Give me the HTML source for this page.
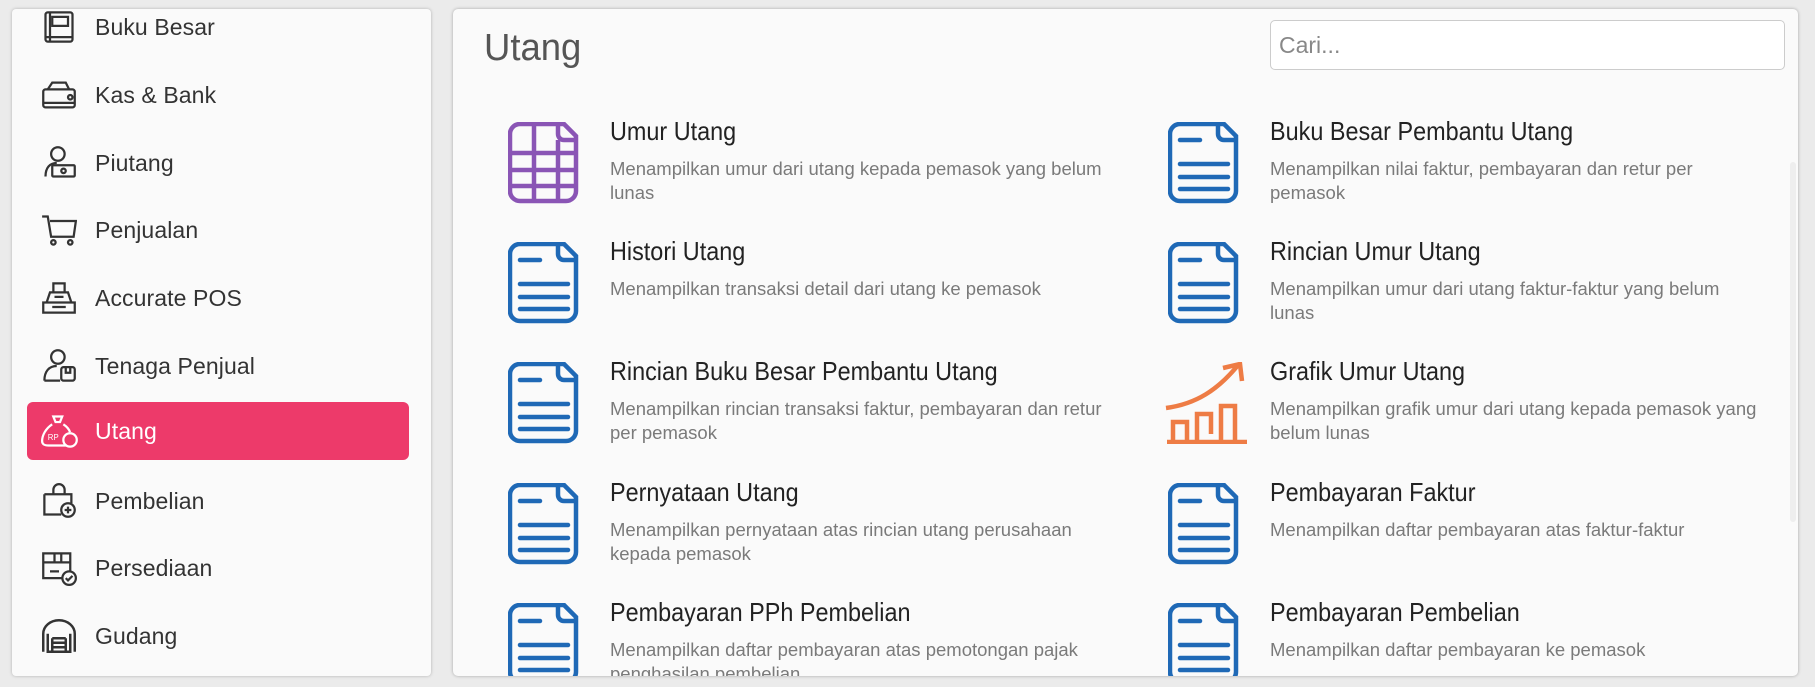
<!DOCTYPE html>
<html><head><meta charset="utf-8"><style>
*{box-sizing:border-box;margin:0;padding:0}
body{width:1815px;height:687px;background:#ebebeb;font-family:"Liberation Sans",sans-serif;position:relative;overflow:hidden}
.side{position:absolute;left:12px;top:9px;width:419px;height:667px;background:#fafafa;border-radius:4px;box-shadow:0 0 3px rgba(0,0,0,.25);overflow:hidden}
.sb{position:absolute;left:424px;top:131px;width:6px;height:332px;background:#eee;border-radius:3px}
.si{position:absolute;left:0;width:410px;height:58px;font-size:23px;color:#333;letter-spacing:.1px}
.si svg{position:absolute;left:29px;top:11px}
.si span{position:absolute;left:83px;top:50%;transform:translateY(-48%)}
.si.act{left:15px;width:382px;background:#ed3a6a;border-radius:6px;color:#fff}
.si.act svg{left:14px}.si.act span{left:68px}
.main{position:absolute;left:453px;top:9px;width:1345px;height:667px;background:#fafafa;border-radius:5px;box-shadow:0 0 3px rgba(0,0,0,.3);overflow:hidden}
h1{position:absolute;left:31px;top:18px;font-weight:normal;font-size:38px;color:#555;transform:scaleX(.96);transform-origin:left}
.search{position:absolute;left:817px;top:11px;width:515px;height:50px;border:1px solid #ccc;border-radius:5px;background:#fff;font-size:23px;color:#888;padding:11px 0 0 8px}
.msb{position:absolute;left:1337px;top:153px;width:6px;height:360px;background:#eee;border-radius:3px}
.it{position:absolute;width:560px}
.it svg{position:absolute;left:0;top:0}
.it b{position:absolute;left:102px;top:-6px;font-weight:normal;font-size:26px;color:#222;white-space:nowrap;transform:scaleX(.9);transform-origin:left}
.it p{position:absolute;left:102px;top:35px;width:495px;font-size:18.5px;line-height:24px;color:#7a7a7a}
</style></head><body>
<div class="side">
<div class="sb"></div>
<div class="si" style="top:-11px"><svg width="36" height="36" viewBox="0 0 32 32" fill="none" stroke="#333" stroke-width="2"><rect x="4" y="3" width="24" height="26" rx="2"/><rect x="10" y="7" width="14" height="8"/><path d="M8 3v26M4 25h24"/></svg><span>Buku Besar</span></div>
<div class="si" style="top:57px"><svg width="36" height="36" viewBox="0 0 32 32" fill="none" stroke="#333" stroke-width="2"><rect x="2" y="11" width="28" height="16" rx="2"/><path d="M6 11l4-6h12l3 6M2 23h28"/><circle cx="26" cy="18" r="2"/></svg><span>Kas &amp; Bank</span></div>
<div class="si" style="top:125px"><svg width="36" height="36" viewBox="0 0 32 32" fill="none" stroke="#333" stroke-width="2"><circle cx="15" cy="8" r="6"/><path d="M4 28c0-8 4-12 10-12"/><rect x="10" y="18" width="20" height="10" rx="1"/><circle cx="20" cy="23" r="2"/></svg><span>Piutang</span></div>
<div class="si" style="top:192px"><svg width="36" height="36" viewBox="0 0 32 32" fill="none" stroke="#333" stroke-width="2"><path d="M1 4h5l3 18h20l2-14H8"/><circle cx="11" cy="27" r="2"/><circle cx="26" cy="27" r="2"/></svg><span>Penjualan</span></div>
<div class="si" style="top:260px"><svg width="36" height="36" viewBox="0 0 32 32" fill="none" stroke="#333" stroke-width="2"><rect x="2" y="20" width="28" height="9"/><path d="M5 20l3-9h16l3 9M11 11V3h10v8M12 15h8M10 24h12"/></svg><span>Accurate POS</span></div>
<div class="si" style="top:328px"><svg width="36" height="36" viewBox="0 0 32 32" fill="none" stroke="#333" stroke-width="2"><circle cx="15" cy="8" r="6"/><path d="M3 29c0-8 4-13 11-13h0M3 29h14"/><rect x="18" y="17" width="12" height="12" rx="2"/><path d="M22 17v5h4v-5"/></svg><span>Tenaga Penjual</span></div>
<div class="si act" style="top:393px"><svg width="38" height="36" viewBox="0 0 34 32" fill="none" stroke="#fff" stroke-width="2"><path d="M11 3h8l-2 5h-4zM10 10c-6 4-9 10-9 15 0 3 2 4 6 4h16"/><path d="M20 10c3 2 5 4 6 7"/><circle cx="26" cy="24" r="6"/><text x="6" y="24" font-size="7" fill="#fff" stroke="none" font-family="Liberation Sans">RP</text></svg><span>Utang</span></div>
<div class="si" style="top:463px"><svg width="36" height="36" viewBox="0 0 32 32" fill="none" stroke="#333" stroke-width="2"><path d="M11 10V6a5 5 0 0110 0v4M3 10h24v8M3 10v18h15"/><circle cx="24" cy="24" r="6"/><path d="M24 21v6M21 24h6"/></svg><span>Pembelian</span></div>
<div class="si" style="top:530px"><svg width="36" height="36" viewBox="0 0 32 32" fill="none" stroke="#333" stroke-width="2"><rect x="2" y="3" width="24" height="22"/><path d="M2 11h24M12 3v8h6V3M8 19h8"/><circle cx="25" cy="25" r="6" fill="#fafafa"/><path d="M22 25l2 2 4-4"/></svg><span>Persediaan</span></div>
<div class="si" style="top:598px"><svg width="36" height="36" viewBox="0 0 32 32" fill="none" stroke="#333" stroke-width="2.2"><path d="M2 14a14 12 0 0128 0M6 14v16h20V14M2 14v16M30 14v16"/><path d="M10 18h12M10 22h12M10 26h12M10 18v12M22 18v12"/></svg><span>Gudang</span></div>
</div>
<div class="main">
<h1>Utang</h1>
<div class="search">Cari...</div>
<div class="msb"></div>
<svg width="0" height="0" style="position:absolute"><defs>
<g id="doc" fill="none" stroke="#1f69b6" stroke-width="4.5" stroke-linecap="round"><path d="M12 2h44l12 12v55a10 10 0 01-10 10H12A10 10 0 012 69V12A10 10 0 0112 2z"/><path d="M50 3v9a6 6 0 006 6h11"/><path d="M12 18h20M12 42h48M12 55h48M12 67h48"/></g>
</defs></svg>
<div class="it" style="left:55px;top:113px"><svg width="72" height="82" viewBox="0 0 72 82" fill="none" stroke="#8a55b5" stroke-width="4.5"><path d="M12 2h44l12 12v55a10 10 0 01-10 10H12A10 10 0 012 69V12A10 10 0 0112 2z"/><path d="M50 3v9a6 6 0 006 6h11M26 2v77M50 18v61M2 31h66M2 48h66M2 64h66"/></svg><b>Umur Utang</b><p>Menampilkan umur dari utang kepada pemasok yang belum lunas</p></div>
<div class="it" style="left:55px;top:233px"><svg width="72" height="82" viewBox="0 0 72 82"><use href="#doc"/></svg><b>Histori Utang</b><p>Menampilkan transaksi detail dari utang ke pemasok</p></div>
<div class="it" style="left:55px;top:353px"><svg width="72" height="82" viewBox="0 0 72 82"><use href="#doc"/></svg><b>Rincian Buku Besar Pembantu Utang</b><p>Menampilkan rincian transaksi faktur, pembayaran dan retur per pemasok</p></div>
<div class="it" style="left:55px;top:474px"><svg width="72" height="82" viewBox="0 0 72 82"><use href="#doc"/></svg><b>Pernyataan Utang</b><p>Menampilkan pernyataan atas rincian utang perusahaan kepada pemasok</p></div>
<div class="it" style="left:55px;top:594px"><svg width="72" height="82" viewBox="0 0 72 82"><use href="#doc"/></svg><b>Pembayaran PPh Pembelian</b><p>Menampilkan daftar pembayaran atas pemotongan pajak penghasilan pembelian</p></div>
<div class="it" style="left:715px;top:113px"><svg width="72" height="82" viewBox="0 0 72 82"><use href="#doc"/></svg><b>Buku Besar Pembantu Utang</b><p>Menampilkan nilai faktur, pembayaran dan retur per pemasok</p></div>
<div class="it" style="left:715px;top:233px"><svg width="72" height="82" viewBox="0 0 72 82"><use href="#doc"/></svg><b>Rincian Umur Utang</b><p>Menampilkan umur dari utang faktur-faktur yang belum lunas</p></div>
<div class="it" style="left:715px;top:353px"><svg width="84" height="82" viewBox="0 0 84 82" fill="none" stroke="#ee7c45" stroke-width="4.5" style="left:-3px"><path d="M1 46c30-4 52-18 73-44M58 6l17-4 2 17"/><path d="M2 80h80M8 80V60h14v20M32 80V52h14v20M56 80V44h14v36"/></svg><b>Grafik Umur Utang</b><p>Menampilkan grafik umur dari utang kepada pemasok yang belum lunas</p></div>
<div class="it" style="left:715px;top:474px"><svg width="72" height="82" viewBox="0 0 72 82"><use href="#doc"/></svg><b>Pembayaran Faktur</b><p>Menampilkan daftar pembayaran atas faktur-faktur</p></div>
<div class="it" style="left:715px;top:594px"><svg width="72" height="82" viewBox="0 0 72 82"><use href="#doc"/></svg><b>Pembayaran Pembelian</b><p>Menampilkan daftar pembayaran ke pemasok</p></div>
</div>
</body></html>
